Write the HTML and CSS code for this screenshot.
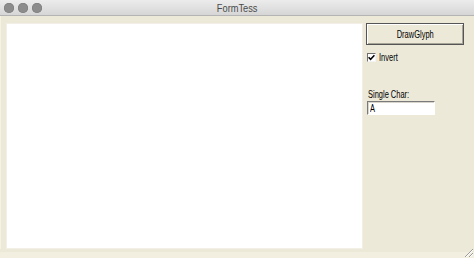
FILE: index.html
```html
<!DOCTYPE html>
<html>
<head>
<meta charset="utf-8">
<title>FormTess</title>
<link rel="stylesheet" href="styles.css">
</head>
<body>
<div class="window">
  <div class="titlebar">
    <div class="lights">
      <span class="light"></span>
      <span class="light"></span>
      <span class="light"></span>
    </div>
    <div class="title"><span class="title-text">FormTess</span></div>
  </div>
  <div class="content">
    <div class="canvas"></div>
    <div class="side">
      <button class="btn"><span class="narrow center">DrawGlyph</span></button>
      <label class="check">
        <span class="box">
          <svg width="7" height="7" viewBox="0 0 7 7"><path d="M0.6 3.2 L2.6 5.3 L6.4 1.2" fill="none" stroke="#000" stroke-width="1.5"/></svg>
        </span>
        <span class="narrow">Invert</span>
      </label>
      <div class="field-label"><span class="narrow">Single Char:</span></div>
      <div class="field"><span class="narrow">A</span></div>
    </div>
  </div>
  <div class="bottom">
    <svg class="grip" width="12" height="12" viewBox="0 0 12 12">
      <path d="M11 3 L3 11 M11 7 L7 11" stroke="#9a9a9a" stroke-width="1" fill="none"/>
      <path d="M11 4 L4 11 M11 8 L8 11" stroke="#ffffff" stroke-width="1" fill="none"/>
    </svg>
  </div>
</div>
</body>
</html>
```
FILE: styles.css
```css
html, body {
  margin: 0;
  padding: 0;
  width: 474px;
  height: 258px;
  overflow: hidden;
  background: #ece9d8;
  font-family: "Liberation Sans", Arial, sans-serif;
}
.window {
  width: 474px;
  height: 258px;
  display: flex;
  flex-direction: column;
  background: #ece9d8;
}
.titlebar {
  height: 15px;
  flex: 0 0 15px;
  background: linear-gradient(#ececec, #d6d6d6);
  border-bottom: 1px solid #b4b4b4;
  position: relative;
  display: flex;
  align-items: center;
}
.lights {
  display: flex;
  gap: 4px;
  padding-left: 4px;
}
.light {
  width: 10px;
  height: 10px;
  border-radius: 50%;
  background: #8c8c8c;
  box-shadow: inset 0 0 0 0.5px #777;
}
.title {
  position: absolute;
  left: 0;
  right: 0;
  top: 0;
  bottom: 0;
  display: flex;
  justify-content: center;
  align-items: center;
  font-size: 11px;
  color: #4a4a4a;
}
.title-text {
  display: inline-block;
  transform: scaleX(0.84);
}
.content {
  flex: 1;
  display: flex;
  padding: 7px 0 0 5px;
  border-left: 1px solid #f6f3e4;
}
.canvas {
  width: 355px;
  height: 224px;
  background: #fff;
  border: 1px solid #f2f0e6;
}
.side {
  margin-left: 3px;
  width: 98px;
  display: flex;
  flex-direction: column;
}
.narrow {
  display: inline-block;
  transform: scaleX(0.68);
  transform-origin: left center;
  white-space: nowrap;
}
.narrow.center {
  transform-origin: center center;
}
.btn {
  width: 98px;
  height: 22px;
  padding: 0;
  margin: 0;
  background: #ece9d8;
  border: 1px solid #555;
  box-shadow: inset 1px 1px 0 #fff, inset -1px -1px 0 #a7a598;
  font-family: inherit;
  font-size: 11px;
  color: #000;
  display: flex;
  align-items: center;
  justify-content: center;
}
.check {
  display: flex;
  align-items: center;
  margin-top: 7px;
  margin-left: 1px;
  font-size: 11px;
  color: #000;
  height: 10px;
}
.box {
  width: 7px;
  height: 7px;
  background: #fff;
  border-top: 1px solid #6f6f6f;
  border-left: 1px solid #6f6f6f;
  border-right: 1px solid #f4f4f4;
  border-bottom: 1px solid #f4f4f4;
  display: flex;
  align-items: center;
  justify-content: center;
  margin-right: 3px;
}
.field-label {
  margin-top: 27px;
  margin-left: 2px;
  font-size: 11px;
  color: #000;
  height: 11px;
  line-height: 11px;
}
.field {
  margin-top: 1px;
  margin-left: 1px;
  width: 64px;
  height: 12px;
  background: #fff;
  border-top: 1px solid #7a7a7a;
  border-left: 1px solid #7a7a7a;
  border-right: 1px solid #fff;
  border-bottom: 1px solid #fff;
  box-shadow: inset 1px 1px 0 #d8d6cc;
  font-size: 11px;
  line-height: 13px;
  padding-left: 2px;
  color: #000;
}
.bottom {
  height: 9px;
  flex: 0 0 9px;
  position: relative;
  background: linear-gradient(#ece9d8 0, #ece9d8 3px, #f2efe0 3px);
}
.grip {
  position: absolute;
  right: 0;
  bottom: 0;
}
```
